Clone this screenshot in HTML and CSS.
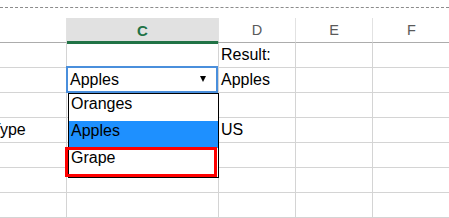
FILE: index.html
```html
<!DOCTYPE html>
<html lang="en">
<head>
    <title>Dropdown in cell</title>
    <link rel="stylesheet" href="styles.css">
</head>
<body>
    <div class="sheet">
        <div class="page-break"></div>

        <div class="grid">
            <div class="head"></div>
            <div class="head active">C</div>
            <div class="head">D</div>
            <div class="head">E</div>
            <div class="head last">F</div>

            <div class="cell"></div>
            <div class="cell"></div>
            <div class="cell">Result:</div>
            <div class="cell"></div>
            <div class="cell last"></div>

            <div class="cell"></div>
            <div class="cell"></div>
            <div class="cell">Apples</div>
            <div class="cell"></div>
            <div class="cell last"></div>

            <div class="cell"></div>
            <div class="cell"></div>
            <div class="cell"></div>
            <div class="cell"></div>
            <div class="cell last"></div>

            <div class="cell clipped">Type</div>
            <div class="cell"></div>
            <div class="cell">US</div>
            <div class="cell"></div>
            <div class="cell last"></div>

            <div class="cell"></div>
            <div class="cell"></div>
            <div class="cell"></div>
            <div class="cell"></div>
            <div class="cell last"></div>

            <div class="cell"></div>
            <div class="cell"></div>
            <div class="cell"></div>
            <div class="cell"></div>
            <div class="cell last"></div>

            <div class="cell"></div>
            <div class="cell"></div>
            <div class="cell"></div>
            <div class="cell"></div>
            <div class="cell last"></div>
        </div>

        <div class="dropdown">
            <div class="select">
                <span>Apples</span>
                <span class="arrow"></span>
            </div>
            <ul class="options">
                <li>Oranges</li>
                <li class="selected">Apples</li>
                <li>Grape</li>
            </ul>
        </div>
        <div class="callout"></div>
    </div>
</body>
</html>
```

FILE: styles.css
```css
body {
    margin: 0;
    padding: 0;
    background-color: #fff;
    font-family: "Liberation Sans", Arial, sans-serif;
    overflow: hidden;
}

.sheet {
    position: relative;
    width: 449px;
    height: 218px;
    overflow: hidden;
}

.page-break {
    height: 7px;
    border-bottom: 1px dashed #8c8c8c;
    margin-bottom: 10px;
}

.grid {
    display: grid;
    grid-template-columns: 67px 152px 77px 77px 77px;
    grid-auto-rows: 25px;
}

.head {
    box-sizing: border-box;
    border-right: 1px solid #e2e2e2;
    border-bottom: 1px solid #acacac;
    color: #5a5a5a;
    font-size: 14.5px;
    display: flex;
    align-items: center;
    justify-content: center;
}

.head.active {
    background-color: #e1e1e1;
    color: #217346;
    font-size: 15px;
    font-weight: bold;
    border-bottom: 3px solid #217346;
    margin-bottom: -1px;
    padding-top: 1px;
}

.cell {
    box-sizing: border-box;
    border-right: 1px solid #d4d4d4;
    border-bottom: 1px solid #d4d4d4;
    font-size: 16px;
    color: #000;
    padding-left: 2px;
    display: flex;
    align-items: center;
    white-space: nowrap;
    overflow: hidden;
}

.last {
    border-right: none;
}

.clipped {
    padding-left: 0;
    text-indent: -9px;
}

.dropdown {
    position: absolute;
    left: 66px;
    top: 66px;
    width: 152px;
}

.select {
    box-sizing: border-box;
    height: 27px;
    border: 2px solid #4a8fdc;
    background-color: #fff;
    font-size: 16px;
    padding: 1px 10px 0 2px;
    display: flex;
    align-items: center;
    justify-content: space-between;
}

.arrow {
    width: 0;
    height: 0;
    border-left: 3px solid transparent;
    border-right: 3px solid transparent;
    border-top: 6px solid #000;
    margin-top: -2px;
}

.options {
    list-style: none;
    margin: 0 0 0 2px;
    padding: 0 0 2px 0;
    width: 151px;
    box-sizing: border-box;
    border: 1px solid #000;
    background-color: #fff;
    font-size: 16px;
}

.options li {
    box-sizing: border-box;
    height: 27px;
    padding: 1px 0 0 2px;
}

.options .selected {
    background-color: #1e90ff;
}

.callout {
    position: absolute;
    left: 65px;
    top: 147px;
    width: 152px;
    height: 30px;
    box-sizing: border-box;
    border: 3px solid #ff0000;
}
```
